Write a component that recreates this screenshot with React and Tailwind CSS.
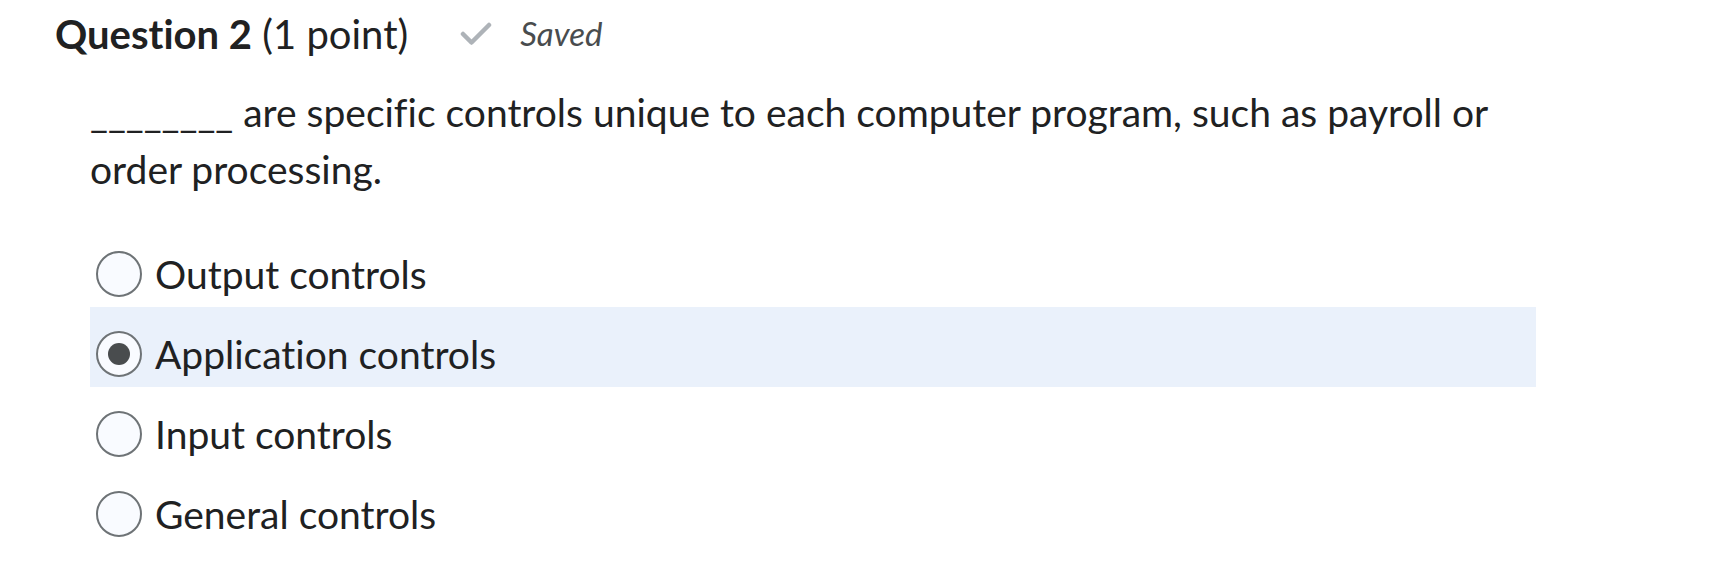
import React from "react";

const options = [
  { label: "Output controls", checked: false },
  { label: "Application controls", checked: true },
  { label: "Input controls", checked: false },
  { label: "General controls", checked: false },
];

function Radio({ checked }) {
  return (
    <div className="w-[46px] h-[46px] shrink-0 rounded-full border-2 border-[#6e7376] bg-[#f9fbff] flex items-center justify-center">
      {checked && <div className="w-[22px] h-[22px] rounded-full bg-[#494c4e]"></div>}
    </div>
  );
}

export default function App() {
  return (
    <div className="w-[1720px] h-[580px] bg-white text-[#202122] font-['Lato','Open_Sans',sans-serif] [font-variant-ligatures:none] pl-[55px] pt-[10px]">
      <div className="flex items-center h-[48px]">
        <h2 className="text-[40px] leading-[48px] font-normal">
          <span className="font-bold">Question 2</span> (1 point)
        </h2>
        <div className="flex items-center ml-[52px] gap-[28px]">
          <svg width="32" height="26" viewBox="0 0 32 26" className="text-[#aeb3b8]">
            <path d="M3 13 L11.5 21.5 L29 4" fill="none" stroke="currentColor" strokeWidth="4.5" strokeLinecap="round" strokeLinejoin="round" />
          </svg>
          <span className="italic text-[33px] text-[#494c4e]">Saved</span>
        </div>
      </div>

      <div className="pl-[35px] w-[1481px]">
        <p className="mt-[26px] text-[39px] leading-[57px]">
          ________ are specific controls unique to each computer program, such as payroll or order processing.
        </p>

        <div className="mt-[29px] flex flex-col">
          {options.map((o) => (
            <div
              key={o.label}
              className={`h-[80px] flex items-center pt-[14px] pl-[6px] gap-[13px] ${o.checked ? "bg-[#eaf1fb]" : ""}`}
            >
              <Radio checked={o.checked} />
              <span className="text-[39px] leading-none">{o.label}</span>
            </div>
          ))}
        </div>
      </div>
    </div>
  );
}
